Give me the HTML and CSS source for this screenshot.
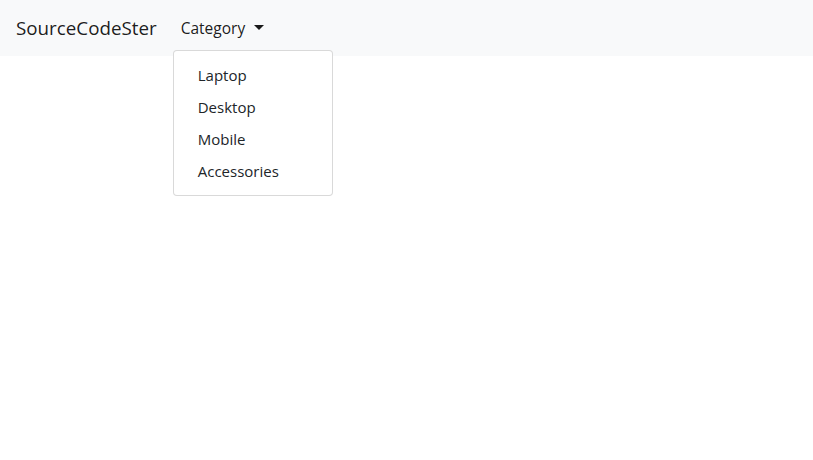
FILE: index.html
```html
<!DOCTYPE html>
<html lang="en">
<head>
<meta charset="utf-8">
<title>SourceCodeSter</title>
<link rel="stylesheet" href="styles.css">
</head>
<body>
<nav class="navbar">
  <a class="brand" href="#">SourceCodeSter</a>
  <ul class="nav">
    <li class="nav-item dropdown">
      <a class="nav-link" href="#">Category<span class="caret"></span></a>
      <div class="dropdown-menu">
        <a class="dropdown-item" href="#">Laptop</a>
        <a class="dropdown-item" href="#">Desktop</a>
        <a class="dropdown-item" href="#">Mobile</a>
        <a class="dropdown-item" href="#">Accessories</a>
      </div>
    </li>
  </ul>
</nav>
</body>
</html>
```
FILE: styles.css
```css
* { box-sizing: border-box; }
html, body { margin: 0; padding: 0; }
body {
  font-family: "Open Sans", "Noto Sans", sans-serif;
  font-size: 16px;
  line-height: 1.5;
  color: #212529;
  background: #fff;
  min-height: 460px;
}
a { text-decoration: none; }
.navbar {
  position: relative;
  display: flex;
  align-items: center;
  padding: 8px 16px;
  background: #f8f9fa;
  z-index: 10;
}
.brand {
  font-size: 18.8px;
  line-height: 30px;
  padding: 5px 0;
  margin-right: 16px;
  color: rgba(0,0,0,.9);
}
.nav {
  display: flex;
  list-style: none;
  margin: 0;
  padding: 0;
}
.nav-item { position: relative; }
.nav-link {
  display: block;
  padding: 8px;
  line-height: 24px;
  font-size: 15.5px;
  color: rgba(0,0,0,.9);
}
.caret {
  display: inline-block;
  margin-left: 9px;
  vertical-align: 4px;
  border-top: 5px solid;
  border-right: 5px solid transparent;
  border-left: 5px solid transparent;
  border-bottom: 0;
}
.dropdown-menu {
  position: absolute;
  top: 100%;
  left: 0;
  margin-top: 2px;
  min-width: 160px;
  padding: 8px 0;
  background: #fff;
  border: 1px solid rgba(0,0,0,.15);
  border-radius: 4px;
  display: flex;
  flex-direction: column;
  z-index: 1000;
}
.dropdown-item {
  display: block;
  padding: 4px 24px;
  line-height: 24px;
  font-size: 15px;
  color: #212529;
  white-space: nowrap;
}
```
